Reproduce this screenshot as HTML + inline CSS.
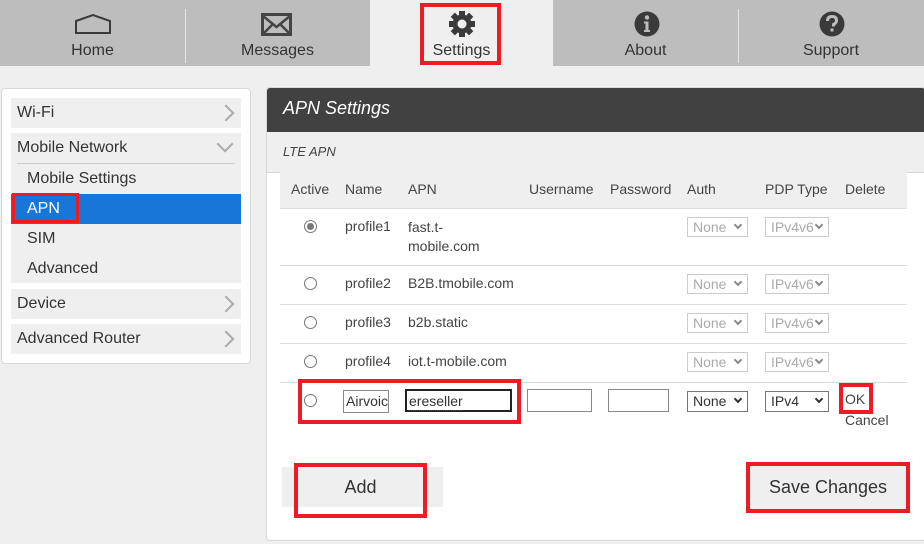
<!DOCTYPE html>
<html><head><meta charset="utf-8"><style>
*{box-sizing:border-box;margin:0;padding:0}
body{width:924px;height:544px;background:#efefef;font-family:"Liberation Sans",Arial,sans-serif;position:relative;overflow:hidden;color:#333}
.a{position:absolute}
.nav{left:0;top:0;width:924px;height:66px;background:#bdbdbd}
.tab{top:0;height:66px;text-align:center;font-size:16px;color:#333}
.tab span{position:absolute;left:0;right:0;top:42px}
.sep{top:9px;width:1px;height:54px;background:#e6e6e6}
.red{border:3px solid #ed1c24}
.side{left:1px;top:88px;width:250px;height:276px;background:#fff;border:1px solid #d8d8d8;border-radius:4px}
.item{left:11px;width:230px;background:#efefef;font-size:16px;color:#333;padding-left:6px;line-height:30px}
.sub{left:11px;width:230px;font-size:16px;padding-left:16px;line-height:30px}
.chev{right:9px;top:9px;width:12px;height:12px;border-right:2px solid #aaa;border-top:2px solid #aaa;transform:rotate(45deg)}
.panel{left:266px;top:87px;width:660px;height:454px;background:#fff;border:1px solid #d8d8d8;border-radius:4px;overflow:hidden}
.hd{left:0;top:0;width:660px;height:44px;background:#414141;color:#fff;font-style:italic;font-size:18px;padding:10px 0 0 16px}
.sh{left:0;top:44px;width:660px;height:41px;background:#efefef;border-bottom:1px solid #d6d6d6;font-style:italic;font-size:13px;padding:12px 0 0 16px;color:#444}
.th{font-size:14px;color:#444;top:181px}
.td{font-size:14px;color:#444}
.line{left:280px;width:627px;height:1px;background:#dcdcdc}
.rad{width:13px;height:13px;border:1px solid #777;border-radius:50%;background:#fff}
.sel{width:61px;height:20px;border:1px solid #ccc;color:#aaa;font-size:14px;padding:1px 0 0 5px;background:#fff}
.sel b,.sel2 b{position:absolute;right:6px;top:4px;width:6px;height:6px;border-right:2px solid #888;border-bottom:2px solid #888;transform:rotate(45deg)}
.sel2{height:21px;border:1px solid #777;color:#333;font-size:14px;padding:1px 0 0 5px;background:#fff}
.sel2 b{border-color:#333}
.inp{height:23px;border:1px solid #888;background:#fff;font-size:14px;padding:2px 0 0 2px}
</style></head><body>
<div class="a nav"></div>
<div class="a" style="left:370px;top:0;width:183px;height:66px;background:#efefef"></div>
<div class="a sep" style="left:185px"></div>
<div class="a sep" style="left:738px"></div>
<div class="a tab" style="left:0;width:185px"><svg class="a" style="left:74px;top:13px" width="38" height="22"><path d="M2 8 L19 2 L36 8 L36 20 L2 20 Z" fill="none" stroke="#3a3a3a" stroke-width="2"/></svg><span>Home</span></div>
<div class="a tab" style="left:185px;width:185px"><svg class="a" style="left:76px;top:13px" width="31" height="23"><rect x="1.5" y="1.5" width="28" height="20" fill="none" stroke="#444" stroke-width="3"/><path d="M2 3 L15.5 14 L29 3 M2 21 L12 11 M29 21 L19 11" stroke="#444" stroke-width="2.5" fill="none"/></svg><span>Messages</span></div>
<div class="a tab" style="left:370px;width:183px"><svg class="a" style="left:78px;top:10px" width="28" height="28" viewBox="-14 -14 28 28"><g fill="#3a3a3a"><rect x="-3" y="-13" width="6" height="26"/><rect x="-3" y="-13" width="6" height="26" transform="rotate(45)"/><rect x="-3" y="-13" width="6" height="26" transform="rotate(90)"/><rect x="-3" y="-13" width="6" height="26" transform="rotate(135)"/><circle r="9.5"/></g><circle r="4.5" fill="#efefef"/></svg><span>Settings</span></div>
<div class="a red" style="left:420px;top:3px;width:81px;height:62px;border-width:4px"></div>
<div class="a tab" style="left:553px;width:185px"><svg class="a" style="left:81px;top:11px" width="26" height="26"><circle cx="13" cy="13" r="12.5" fill="#3a3a3a"/><circle cx="13" cy="6.5" r="2.2" fill="#bdbdbd"/><path d="M10 10.5 H14.5 V19 H16 V21 H10 V19 H11.5 V12.5 H10Z" fill="#bdbdbd"/></svg><span>About</span></div>
<div class="a tab" style="left:738px;width:186px"><svg class="a" style="left:81px;top:11px" width="26" height="26"><circle cx="13" cy="13" r="12.5" fill="#3a3a3a"/><path d="M8.5 10 Q8.5 5.5 13 5.5 Q17.5 5.5 17.5 9.5 Q17.5 12 14.5 13.5 V15.5" fill="none" stroke="#bdbdbd" stroke-width="3"/><rect x="11.5" y="17.5" width="3" height="3" fill="#bdbdbd"/></svg><span>Support</span></div>

<div class="a side"></div>
<div class="a item" style="top:98px;height:30px">Wi-Fi<div class="a chev"></div></div>
<div class="a item" style="top:133px;height:150px">Mobile Network<div class="a" style="right:10px;top:5px;width:12px;height:12px;border-right:2px solid #aaa;border-bottom:2px solid #aaa;transform:rotate(45deg)"></div><div class="a" style="left:6px;top:30px;width:218px;height:1px;background:#ccc"></div></div>
<div class="a sub" style="top:164px">Mobile Settings</div>
<div class="a sub" style="top:194px;background:#1976d9;color:#fff">APN</div>
<div class="a red" style="left:12px;top:193px;width:67px;height:30px"></div>
<div class="a sub" style="top:224px">SIM</div>
<div class="a sub" style="top:254px">Advanced</div>
<div class="a item" style="top:289px;height:30px">Device<div class="a chev"></div></div>
<div class="a item" style="top:324px;height:30px">Advanced Router<div class="a chev"></div></div>

<div class="a panel"><div class="a hd">APN Settings</div><div class="a sh">LTE APN</div></div>
<div class="a" style="left:280px;top:172px;width:627px;height:36px;background:#efefef"></div>
<div class="a th" style="left:291px">Active</div><div class="a th" style="left:345px">Name</div><div class="a th" style="left:408px">APN</div><div class="a th" style="left:529px">Username</div><div class="a th" style="left:610px">Password</div><div class="a th" style="left:687px">Auth</div><div class="a th" style="left:765px">PDP Type</div><div class="a th" style="left:845px">Delete</div>
<div class="a line" style="top:208px"></div>
<div class="a line" style="top:265px"></div>
<div class="a line" style="top:304px"></div>
<div class="a line" style="top:343px"></div>
<div class="a line" style="top:382px"></div>

<div class="a rad" style="left:304px;top:220px"><div class="a" style="left:2px;top:2px;width:7px;height:7px;border-radius:50%;background:#777"></div></div>
<div class="a td" style="left:345px;top:218px">profile1</div><div class="a td" style="left:408px;top:218px;line-height:19px">fast.t-<br>mobile.com</div>
<div class="a sel" style="left:687px;top:217px">None<b></b></div><div class="a sel" style="left:765px;top:217px;width:64px">IPv4v6<b></b></div>

<div class="a rad" style="left:304px;top:277px"></div>
<div class="a td" style="left:345px;top:275px">profile2</div><div class="a td" style="left:408px;top:275px">B2B.tmobile.com</div>
<div class="a sel" style="left:687px;top:274px">None<b></b></div><div class="a sel" style="left:765px;top:274px;width:64px">IPv4v6<b></b></div>

<div class="a rad" style="left:304px;top:316px"></div>
<div class="a td" style="left:345px;top:314px">profile3</div><div class="a td" style="left:408px;top:314px">b2b.static</div>
<div class="a sel" style="left:687px;top:313px">None<b></b></div><div class="a sel" style="left:765px;top:313px;width:64px">IPv4v6<b></b></div>

<div class="a rad" style="left:304px;top:355px"></div>
<div class="a td" style="left:345px;top:353px">profile4</div><div class="a td" style="left:408px;top:353px">iot.t-mobile.com</div>
<div class="a sel" style="left:687px;top:352px">None<b></b></div><div class="a sel" style="left:765px;top:352px;width:64px">IPv4v6<b></b></div>

<div class="a rad" style="left:304px;top:394px"></div>
<div class="a inp" style="left:343px;top:390px;width:46px">Airvoic</div>
<div class="a inp" style="left:405px;top:389px;width:107px;border:2px solid #222">ereseller<div class="a" style="left:2px;top:17px;width:53px;height:3px;border-bottom:1px dotted #e00"></div></div>
<div class="a inp" style="left:527px;top:389px;width:65px"></div>
<div class="a inp" style="left:608px;top:389px;width:61px"></div>
<div class="a sel2" style="left:687px;top:391px;width:61px">None<b></b></div>
<div class="a sel2" style="left:765px;top:391px;width:64px">IPv4<b></b></div>
<div class="a td" style="left:845px;top:391px">OK</div>
<div class="a td" style="left:845px;top:412px">Cancel</div>
<div class="a red" style="left:298px;top:379px;width:223px;height:45px;border-width:4px"></div>
<div class="a red" style="left:839px;top:383px;width:34px;height:31px;border-width:4px"></div>

<div class="a" style="left:282px;top:467px;width:161px;height:40px;background:#efefef"></div>
<div class="a" style="left:294px;top:477px;width:133px;text-align:center;font-size:18px;color:#333">Add</div>
<div class="a red" style="left:294px;top:463px;width:133px;height:55px;border-width:4px"></div>
<div class="a" style="left:748px;top:464px;width:160px;height:46px;background:#efefef"></div>
<div class="a" style="left:746px;top:477px;width:164px;text-align:center;font-size:18px;color:#333">Save Changes</div>
<div class="a red" style="left:746px;top:462px;width:164px;height:51px;border-width:4px"></div>
</body></html>
